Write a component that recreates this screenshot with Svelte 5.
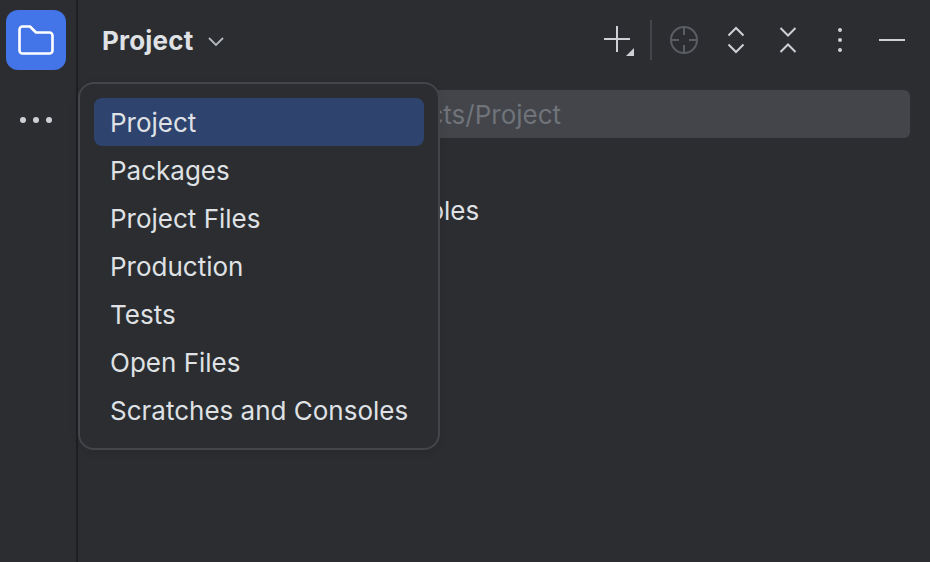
<script>
  let views = ["Project", "Packages", "Project Files", "Production", "Tests", "Open Files", "Scratches and Consoles"];
  let selected = "Project";
</script>

<div class="window">
  <aside class="stripe">
    <button class="tool active" aria-label="Project">
      <svg width="36" height="30" viewBox="0 0 36 30" fill="none" stroke="#fff" stroke-width="2.6">
        <path d="M1.500 4.500a3 3 0 0 1 3-3h7.500l6 6h13.500a3 3 0 0 1 3 3v15a3 3 0 0 1-3 3h-27a3 3 0 0 1-3-3z" stroke-linejoin="round"/>
      </svg>
    </button>
    <div class="more"><i></i><i></i><i></i></div>
  </aside>

  <main class="panel">
    <header class="head">
      <div class="title">Project
        <svg width="16" height="10" viewBox="0 0 16 10" fill="none" stroke="#b4b8bf" stroke-width="1.800"><path d="M1 1l7 7 7-7"/></svg>
      </div>
      <div class="actions">
        <svg width="30" height="32" viewBox="0 0 30 32" fill="none">
          <path d="M13 2v26M0 15h26" stroke="#ced0d6" stroke-width="2"/>
          <path d="M30 24v8h-8z" fill="#ced0d6"/>
        </svg>
        <span class="sep"></span>
        <svg class="locate" width="30" height="30" viewBox="0 0 30 30" fill="none" stroke="#5a5d63" stroke-width="2">
          <circle cx="15" cy="15" r="13"/>
          <path d="M15 2v8M15 20v8M2 15h8M20 15h8"/>
        </svg>
        <svg class="expand" width="18" height="30" viewBox="0 0 18 30" fill="none" stroke="#ced0d6" stroke-width="2">
          <path d="M1.500 10.500L9 3l7.500 7.500M1.500 19.500L9 27l7.500-7.500"/>
        </svg>
        <svg class="collapse" width="18" height="28" viewBox="0 0 18 28" fill="none" stroke="#ced0d6" stroke-width="2">
          <path d="M1.500 2L9 9.500 16.500 2M1.500 26L9 18.500l7.500 7.500"/>
        </svg>
        <div class="kebab"><i></i><i></i><i></i></div>
        <span class="hide"></span>
      </div>
    </header>

    <div class="search">~/IdeaProjects/Project</div>
    <div class="tree">
      <div class="node">Scratches and Consoles</div>
    </div>

    <div class="popup">
      {#each views as v}
        <div class="item" class:sel={v === selected}>{v}</div>
      {/each}
    </div>
  </main>
</div>

<style>
  :global(body) {
    margin: 0;
    background: #2b2d30;
  }

  .window {
    display: flex;
    width: 930px;
    height: 562px;
    overflow: hidden;
    background: #2b2d30;
    font-family: Inter, "Liberation Sans", sans-serif;
    color: #dfe1e5;
  }

  .stripe {
    width: 76px;
    flex: none;
    border-right: 2px solid #1e1f22;
    display: flex;
    flex-direction: column;
    align-items: center;
    box-sizing: content-box;
    padding-top: 10px;
  }

  .tool {
    width: 60px;
    height: 60px;
    border: 0;
    padding: 0;
    margin-left: -4px;
    border-radius: 12px;
    background: #4374e8;
    display: flex;
    align-items: center;
    justify-content: center;
  }

  .more {
    margin-top: 47px;
    margin-left: -4px;
    display: flex;
    gap: 7px;
  }

  .more i {
    width: 6px;
    height: 6px;
    border-radius: 50%;
    background: #ced0d6;
  }

  .panel {
    flex: 1;
    position: relative;
    display: flex;
    flex-direction: column;
    padding-right: 20px;
  }

  .head {
    height: 80px;
    display: flex;
    align-items: center;
    justify-content: space-between;
  }

  .title {
    margin-left: 24px;
    font-size: 26px;
    font-weight: 700;
    letter-spacing: 0.2px;
    display: flex;
    align-items: center;
    gap: 14px;
  }

  .title svg {
    margin-top: 3px;
  }

  .actions {
    display: flex;
    align-items: center;
    margin-right: 5px;
  }

  .sep {
    width: 2px;
    height: 40px;
    background: #43454a;
    margin: 0 17px 0 16px;
  }

  .expand {
    margin-left: 28px;
  }

  .collapse {
    margin-left: 34px;
  }

  .kebab {
    margin-left: 41px;
    display: flex;
    flex-direction: column;
    gap: 6px;
  }

  .kebab i {
    width: 4px;
    height: 4px;
    border-radius: 50%;
    background: #ced0d6;
  }

  .hide {
    width: 26px;
    height: 2px;
    background: #ced0d6;
    margin-left: 37px;
  }

  .search {
    margin: 10px 0 0 0;
    height: 48px;
    line-height: 50px;
    border-radius: 6px;
    background: #43454a;
    color: #6f737a;
    font-size: 26px;
    padding-left: 208px;
    white-space: nowrap;
  }

  .tree {
    padding: 48px 0 0 103px;
  }

  .node {
    height: 48px;
    line-height: 50px;
    font-size: 26px;
    white-space: nowrap;
  }

  /* dropdown sits over the search field and tree */
  .popup {
    position: absolute;
    left: 0;
    top: 82px;
    width: 362px;
    box-sizing: border-box;
    padding: 14px;
    background: #2b2d30;
    border: 2px solid #43454a;
    border-radius: 16px;
    box-shadow: 0 2px 10px rgba(0, 0, 0, 0.1);
  }

  .item {
    height: 48px;
    line-height: 50px;
    padding-left: 16px;
    font-size: 26px;
    border-radius: 8px;
    white-space: nowrap;
  }

  .item.sel {
    background: #2e436e;
  }
</style>
